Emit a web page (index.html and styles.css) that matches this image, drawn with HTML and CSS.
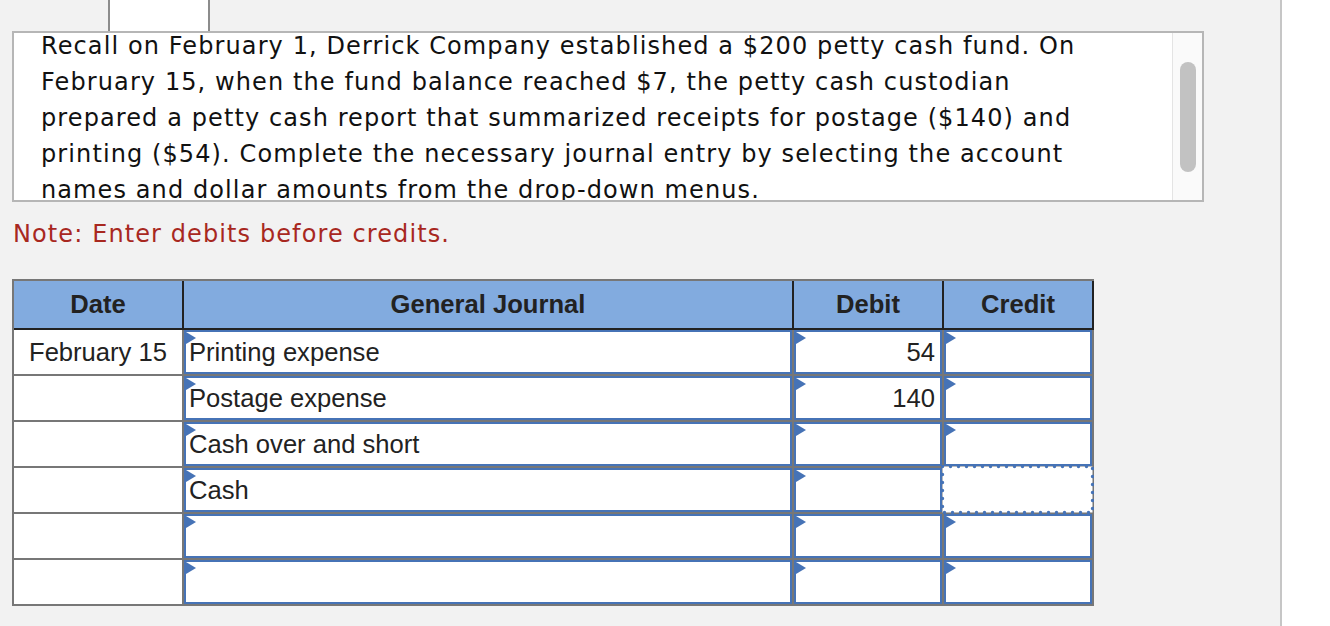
FILE: index.html
```html
<!DOCTYPE html>
<html lang="en">
<head>
<meta charset="utf-8">
<title>Journal entry</title>
<link rel="stylesheet" href="styles.css">
</head>
<body>
<div class="page">
  <main class="panel">
    <div class="tab"></div>
    <div class="question">
      <div class="question-text">
        <p>Recall on February 1, Derrick Company established a $200 petty cash fund. On<br>
        February 15, when the fund balance reached $7, the petty cash custodian<br>
        prepared a petty cash report that summarized receipts for postage ($140) and<br>
        printing ($54). Complete the necessary journal entry by selecting the account<br>
        names and dollar amounts from the drop-down menus.</p>
      </div>
      <div class="scrollbar"><div class="thumb"></div></div>
    </div>
    <p class="note">Note: Enter debits before credits.</p>

    <div class="journal">
      <div class="journal-head">
        <div class="th">Date</div>
        <div class="th">General Journal</div>
        <div class="th">Debit</div>
        <div class="th">Credit</div>
      </div>
      <div class="journal-body">
        <div class="date">February 15</div>
        <div class="cell">Printing expense</div>
        <div class="cell num">54</div>
        <div class="cell num"></div>

        <div class="date"></div>
        <div class="cell">Postage expense</div>
        <div class="cell num">140</div>
        <div class="cell num"></div>

        <div class="date"></div>
        <div class="cell">Cash over and short</div>
        <div class="cell num"></div>
        <div class="cell num"></div>

        <div class="date"></div>
        <div class="cell">Cash</div>
        <div class="cell num"></div>
        <div class="cell num focus">
          <svg class="focus-ring" width="153" height="49" viewBox="0 0 153 49"><rect x="1.5" y="1.5" width="150" height="46" fill="#fff" stroke="#4673b6" stroke-width="3.4" stroke-dasharray="0 8" stroke-linecap="round"/></svg>
        </div>

        <div class="date"></div>
        <div class="cell"></div>
        <div class="cell num"></div>
        <div class="cell num"></div>

        <div class="date"></div>
        <div class="cell"></div>
        <div class="cell num"></div>
        <div class="cell num"></div>
      </div>
    </div>
  </main>
  <div class="side"></div>
</div>
</body>
</html>
```

FILE: styles.css
```css
html, body {
  margin: 0;
  padding: 0;
  background: #ffffff;
}

.page {
  display: flex;
  width: 1330px;
  height: 626px;
  overflow: hidden;
}

.panel {
  width: 1268px;
  height: 626px;
  padding-left: 12px;
  background: #f2f2f2;
  border-right: 2px solid #c6c6c6;
}

.side {
  flex: 1;
  background: #ffffff;
}

.tab {
  width: 98px;
  height: 31px;
  margin-left: 96px;
  background: #ffffff;
  border-left: 2px solid #8c8c8c;
  border-right: 2px solid #8c8c8c;
}

.question {
  display: flex;
  width: 1188px;
  height: 167px;
  background: #ffffff;
  border: 2px solid #b6b6b6;
}

.question-text {
  flex: 1;
  overflow: hidden;
  padding-left: 27px;
}

.question-text p {
  margin: -5px 0 0 0;
  font-family: "DejaVu Sans", Verdana, sans-serif;
  font-size: 24px;
  letter-spacing: 1.1px;
  line-height: 36px;
  color: #111111;
  white-space: nowrap;
}

.scrollbar {
  width: 29px;
  background: #fafafa;
  border-left: 1px solid #e4e4e4;
}

.thumb {
  width: 16px;
  height: 110px;
  margin: 29px 0 0 7px;
  border-radius: 8px;
  background: #c2c2c2;
}

.note {
  margin: 17px 0 0 1px;
  font-family: "DejaVu Sans", Verdana, sans-serif;
  font-size: 24px;
  letter-spacing: 1.1px;
  line-height: 30px;
  color: #a8281f;
}

.journal {
  width: 1080px;
  margin-top: 30px;
  border-top: 2px solid #777777;
  border-left: 2px solid #777777;
  border-bottom: 2px solid #777777;
  font-family: "Liberation Sans", Arial, sans-serif;
  font-size: 25.6px;
  color: #222222;
}

.journal-head,
.journal-body {
  display: grid;
  grid-template-columns: 168px 608px 148px 148px;
  column-gap: 2px;
}

.journal-head {
  background: #222222;
  padding: 0 2px 2px 0;
}

.th {
  height: 47px;
  display: flex;
  align-items: center;
  justify-content: center;
  background: #82abdf;
  font-weight: bold;
}

.journal-body {
  background: #777777;
  padding-right: 2px;
  row-gap: 2px;
  grid-auto-rows: 44px;
}

.date {
  display: flex;
  align-items: center;
  justify-content: center;
  background: #ffffff;
}

.cell {
  position: relative;
  display: flex;
  align-items: center;
  padding-left: 3px;
  background: #ffffff;
  border: 2px solid #4673b6;
}

.cell::before {
  content: "";
  position: absolute;
  left: 0;
  top: 0;
  width: 0;
  height: 0;
  border-left: 10px solid #4673b6;
  border-top: 6px solid transparent;
  border-bottom: 6px solid transparent;
}

.cell.num {
  justify-content: flex-end;
  padding-left: 0;
  padding-right: 5px;
}

.cell.focus {
  border: none;
}

.cell.focus::before {
  display: none;
}

.focus-ring {
  position: absolute;
  left: -3px;
  top: -3px;
}
```
